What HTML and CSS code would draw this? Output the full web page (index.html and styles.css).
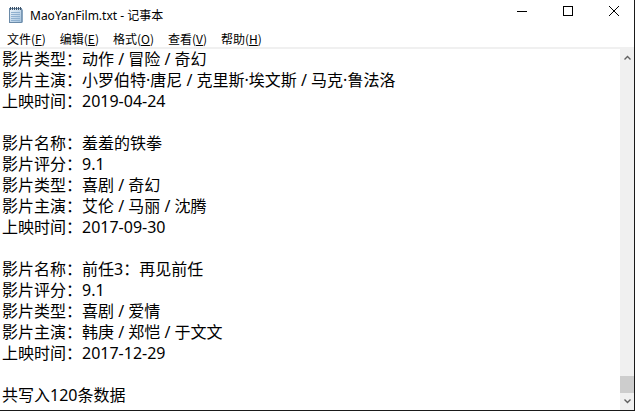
FILE: index.html
```html
<!DOCTYPE html>
<html lang="zh-CN">
<head>
  <meta charset="UTF-8">
  <meta name="viewport" content="width=device-width, initial-scale=1.0">
  <title>MaoYanFilm.txt - 记事本</title>
  <link rel="stylesheet" href="styles.css">
</head>
<body>

  <div class="window">

    <!-- Title Bar -->
    <div class="titlebar">
      <svg class="app-icon" width="16" height="17" viewBox="0 0 16 17">
        <defs>
          <linearGradient id="page" x1="0" y1="0" x2="1" y2="1">
            <stop offset="0" stop-color="#eef5fb"/>
            <stop offset="1" stop-color="#9fbfdc"/>
          </linearGradient>
        </defs>
        <rect x="1.5" y="2.5" width="12" height="14" fill="url(#page)" stroke="#6a8aa8"/>
        <rect x="13.5" y="3.5" width="1.5" height="13" fill="#8aa6c0"/>
        <g fill="#3d5268">
          <rect x="2" y="1" width="1" height="3"/>
          <rect x="4" y="1" width="1" height="3"/>
          <rect x="6" y="1" width="1" height="3"/>
          <rect x="8" y="1" width="1" height="3"/>
          <rect x="10" y="1" width="1" height="3"/>
          <rect x="12" y="1" width="1" height="3"/>
        </g>
        <g stroke="#8fb0cf" stroke-width="1">
          <line x1="3" y1="6.5" x2="12" y2="6.5"/>
          <line x1="3" y1="8.5" x2="12" y2="8.5"/>
          <line x1="3" y1="10.5" x2="12" y2="10.5"/>
          <line x1="3" y1="12.5" x2="12" y2="12.5"/>
          <line x1="3" y1="14.5" x2="12" y2="14.5"/>
        </g>
      </svg>
      <span class="title">MaoYanFilm.txt - 记事本</span>
      <div class="controls">
        <div class="control">
          <svg width="10" height="10" viewBox="0 0 10 10"><line x1="0" y1="5.5" x2="10" y2="5.5" stroke="#000"/></svg>
        </div>
        <div class="control">
          <svg width="10" height="10" viewBox="0 0 10 10"><rect x="0.5" y="0.5" width="9" height="9" fill="none" stroke="#000"/></svg>
        </div>
        <div class="control">
          <svg width="10" height="10" viewBox="0 0 10 10"><path d="M0 0 L10 10 M10 0 L0 10" stroke="#000" stroke-width="1"/></svg>
        </div>
      </div>
    </div>

    <!-- Menu Bar -->
    <div class="menubar">
      <span class="menu-item">文件(<u>F</u>)</span>
      <span class="menu-item">编辑(<u>E</u>)</span>
      <span class="menu-item">格式(<u>O</u>)</span>
      <span class="menu-item">查看(<u>V</u>)</span>
      <span class="menu-item">帮助(<u>H</u>)</span>
    </div>

    <!-- Edit Area -->
    <div class="editor">
      <div class="text">
        <div class="line">影片类型：动作 / 冒险 / 奇幻</div>
        <div class="line">影片主演：小罗伯特·唐尼 / 克里斯·埃文斯 / 马克·鲁法洛</div>
        <div class="line">上映时间：2019-04-24</div>
        <div class="line"></div>
        <div class="line">影片名称：羞羞的铁拳</div>
        <div class="line">影片评分：9.1</div>
        <div class="line">影片类型：喜剧 / 奇幻</div>
        <div class="line">影片主演：艾伦 / 马丽 / 沈腾</div>
        <div class="line">上映时间：2017-09-30</div>
        <div class="line"></div>
        <div class="line">影片名称：前任3：再见前任</div>
        <div class="line">影片评分：9.1</div>
        <div class="line">影片类型：喜剧 / 爱情</div>
        <div class="line">影片主演：韩庚 / 郑恺 / 于文文</div>
        <div class="line">上映时间：2017-12-29</div>
        <div class="line"></div>
        <div class="line">共写入120条数据</div>
      </div>

      <!-- Vertical Scrollbar -->
      <div class="scrollbar">
        <div class="arrow">
          <svg width="7" height="5" viewBox="0 0 7 5"><path d="M0.5 4.5 L3.5 1.5 L6.5 4.5" fill="none" stroke="#606060" stroke-width="1.4"/></svg>
        </div>
        <div class="track">
          <div class="thumb"></div>
        </div>
        <div class="arrow">
          <svg width="7" height="5" viewBox="0 0 7 5"><path d="M0.5 0.5 L3.5 3.5 L6.5 0.5" fill="none" stroke="#606060" stroke-width="1.4"/></svg>
        </div>
      </div>
    </div>

  </div>

</body>
</html>
```

FILE: styles.css
```css
/* Basic Styling */
body {
  margin: 0;
  background-color: #ffffff;
  font-family: "Noto Sans", "Noto Sans CJK SC", sans-serif;
  overflow: hidden;
}

/* Window Frame */
.window {
  width: 634px;
  height: 410px;
  border-right: 1px solid #1a1a1a;
  border-bottom: 1px solid #1a1a1a;
  display: flex;
  flex-direction: column;
  background-color: #ffffff;
}

/* Title Bar */
.titlebar {
  height: 30px;
  display: flex;
  align-items: center;
  flex-shrink: 0;
}

.app-icon {
  margin-left: 8px;
  margin-bottom: 2px;
}

.title {
  margin-left: 6px;
  font-size: 12px;
  color: #000000;
}

.controls {
  margin-left: auto;
  display: flex;
  height: 100%;
}

.control {
  width: 46px;
  height: 100%;
  box-sizing: border-box;
  padding-left: 5px;
  display: flex;
  justify-content: center;
  align-items: center;
  margin-top: -4px;
}

/* Menu Bar */
.menubar {
  height: 17px;
  display: flex;
  align-items: center;
  flex-shrink: 0;
  border-bottom: 2px solid #f0f0f0;
}

.menu-item {
  font-family: "Noto Sans CJK SC", sans-serif;
  font-size: 12px;
  line-height: 17px;
  padding: 0 7px;
  color: #000000;
}

.menu-item u {
  text-underline-offset: 1px;
}

/* Edit Area */
.editor {
  flex: 1;
  display: flex;
  min-height: 0;
}

.text {
  flex: 1;
  padding-left: 2px;
  font-size: 16px;
  color: #000000;
  overflow: hidden;
}

.line {
  height: 21px;
  line-height: 21px;
  white-space: pre;
}

/* Scrollbar */
.scrollbar {
  width: 14px;
  background-color: #f0f0f0;
  display: flex;
  flex-direction: column;
}

.arrow {
  height: 17px;
  display: flex;
  justify-content: center;
  align-items: center;
}

.track {
  flex: 1;
  display: flex;
  flex-direction: column;
}

.thumb {
  margin-top: auto;
  height: 17px;
  background-color: #cdcdcd;
}
```
